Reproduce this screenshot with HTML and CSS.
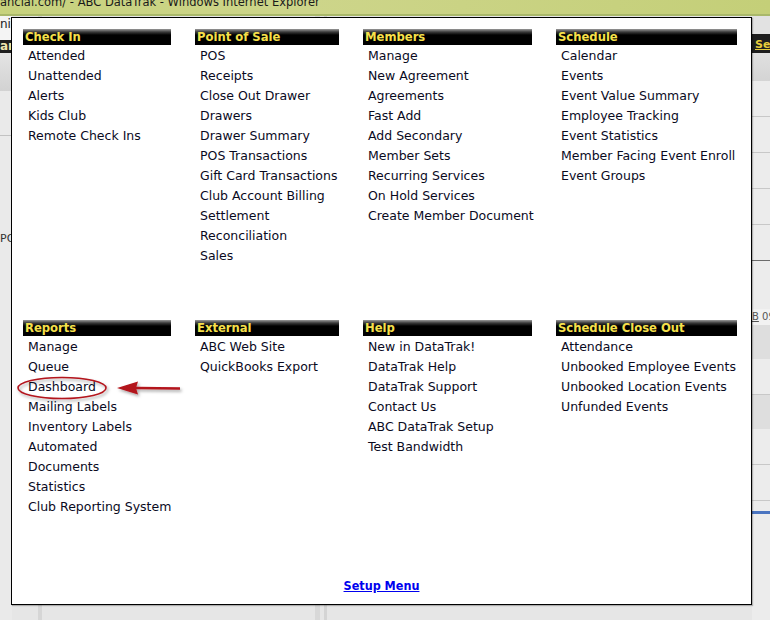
FILE: index.html
```html
<!DOCTYPE html>
<html lang="en">
<head>
  <meta charset="UTF-8">
  <title>ABC DataTrak - Menu</title>
  <link rel="stylesheet" href="styles.css">
</head>
<body>
  <div class="titlebar">ancial.com/ - ABC DataTrak - Windows Internet Explorer</div>

  <div class="page">
    <div class="side side-left">
      <div class="blk blk-light">niv</div>
      <div class="blk blk-dark">an</div>
      <div class="blk blk-grey"></div>
      <div class="blk blk-rule"></div>
      <div class="blk blk-text">PO</div>
    </div>
    <div class="side side-mid"></div>
    <div class="side side-right">
      <div class="blk blk-top"></div>
      <div class="blk blk-dark"><u class="set">Set</u></div>
      <div class="blk blk-grey"></div>
      <div class="blk blk-row"></div>
      <div class="blk blk-row"></div>
      <div class="blk blk-row"></div>
      <div class="blk blk-row"></div>
      <div class="blk blk-row blk-row-dark"></div>
      <div class="blk blk-pad"></div>
      <div class="blk blk-small"><u>B</u> 09</div>
      <div class="blk blk-grey2"></div>
      <div class="blk blk-row"></div>
      <div class="blk blk-grey2"></div>
      <div class="blk blk-row"></div>
      <div class="blk blk-row"></div>
      <div class="blk blk-blue"></div>
    </div>
  </div>

  <div class="menu">
    <div class="menu-grid">
      <div class="group">
        <div class="group-title">Check In</div>
        <div class="item">Attended</div>
        <div class="item">Unattended</div>
        <div class="item">Alerts</div>
        <div class="item">Kids Club</div>
        <div class="item">Remote Check Ins</div>
      </div>
      <div class="group">
        <div class="group-title">Point of Sale</div>
        <div class="item">POS</div>
        <div class="item">Receipts</div>
        <div class="item">Close Out Drawer</div>
        <div class="item">Drawers</div>
        <div class="item">Drawer Summary</div>
        <div class="item">POS Transactions</div>
        <div class="item">Gift Card Transactions</div>
        <div class="item">Club Account Billing</div>
        <div class="item">Settlement</div>
        <div class="item">Reconciliation</div>
        <div class="item">Sales</div>
      </div>
      <div class="group">
        <div class="group-title">Members</div>
        <div class="item">Manage</div>
        <div class="item">New Agreement</div>
        <div class="item">Agreements</div>
        <div class="item">Fast Add</div>
        <div class="item">Add Secondary</div>
        <div class="item">Member Sets</div>
        <div class="item">Recurring Services</div>
        <div class="item">On Hold Services</div>
        <div class="item">Create Member Document</div>
      </div>
      <div class="group">
        <div class="group-title">Schedule</div>
        <div class="item">Calendar</div>
        <div class="item">Events</div>
        <div class="item">Event Value Summary</div>
        <div class="item">Employee Tracking</div>
        <div class="item">Event Statistics</div>
        <div class="item">Member Facing Event Enroll</div>
        <div class="item">Event Groups</div>
      </div>

      <div class="group">
        <div class="group-title">Reports</div>
        <div class="item">Manage</div>
        <div class="item">Queue</div>
        <div class="item item-marked">Dashboard</div>
        <div class="item">Mailing Labels</div>
        <div class="item">Inventory Labels</div>
        <div class="item">Automated</div>
        <div class="item">Documents</div>
        <div class="item">Statistics</div>
        <div class="item">Club Reporting System</div>
      </div>
      <div class="group">
        <div class="group-title">External</div>
        <div class="item">ABC Web Site</div>
        <div class="item">QuickBooks Export</div>
      </div>
      <div class="group">
        <div class="group-title">Help</div>
        <div class="item">New in DataTrak!</div>
        <div class="item">DataTrak Help</div>
        <div class="item">DataTrak Support</div>
        <div class="item">Contact Us</div>
        <div class="item">ABC DataTrak Setup</div>
        <div class="item">Test Bandwidth</div>
      </div>
      <div class="group">
        <div class="group-title">Schedule Close Out</div>
        <div class="item">Attendance</div>
        <div class="item">Unbooked Employee Events</div>
        <div class="item">Unbooked Location Events</div>
        <div class="item">Unfunded Events</div>
      </div>
    </div>

    <div class="menu-footer"><a href="#" class="setup-link">Setup Menu</a></div>

    <!-- annotation drawn over the screenshot -->
    <svg class="callout" width="180" height="40" viewBox="0 0 180 40">
      <defs>
        <filter id="soft" x="-20%" y="-50%" width="140%" height="200%">
          <feDropShadow dx="1.5" dy="2" stdDeviation="1.5" flood-color="#000" flood-opacity="0.35"/>
        </filter>
      </defs>
      <g filter="url(#soft)">
        <ellipse cx="50" cy="21" rx="44" ry="10.5" fill="none" stroke="#b3131b" stroke-width="1.6"/>
        <line x1="124" y1="21" x2="168" y2="21.5" stroke="#b3131b" stroke-width="2.4"/>
        <path d="M105 21 L126 14.5 L124 21 L126 27.5 Z" fill="#b3131b"/>
      </g>
    </svg>
  </div>
</body>
</html>
```

FILE: styles.css
```css
body {
  margin: 0;
  width: 770px;
  height: 620px;
  overflow: hidden;
  background-color: #e6e6e6;
  font-family: "DejaVu Sans", Verdana, sans-serif;
}

.titlebar {
  height: 14px;
  line-height: 5px;
  font-size: 11.5px;
  color: #1a1a1a;
  white-space: nowrap;
  overflow: hidden;
  background: linear-gradient(90deg, #c7d27d, #cdd58a 40%, #c4cf78);
  border-bottom: 2px solid #a9b86a;
}

.page {
  display: flex;
  height: 604px;
}

.side-left {
  width: 12px;
  background-color: #eaeaea;
}

.side-mid {
  flex: 1;
  background: linear-gradient(90deg, #e6e6e6 26px, #d6d6d6 26px, #d6d6d6 30px, #e6e6e6 30px,
    #e6e6e6 303px, #d8d8d8 303px, #d8d8d8 308px, #e6e6e6 308px,
    #e6e6e6 312px, #d4d4d4 312px, #d4d4d4 315px, #e6e6e6 315px);
}

.side-right {
  width: 18px;
  background-color: #ececec;
}

.blk {
  overflow: hidden;
  white-space: nowrap;
  font-size: 12px;
}

.side-left .blk-light {
  height: 24px;
  line-height: 16px;
  color: #222;
  background-color: #f4f4f4;
}

.side-left .blk-dark {
  height: 13px;
  line-height: 13px;
  font-weight: bold;
  color: #eee6b0;
  background-color: #1e1e1e;
}

.side-left .blk-grey {
  height: 38px;
  background: linear-gradient(#e4e4e4, #d2d2d2);
}

.side-left .blk-rule {
  height: 44px;
  border-bottom: 1px solid #c2c2c2;
}

.side-left .blk-text {
  margin-top: 96px;
  line-height: 14px;
  font-size: 11px;
  color: #333;
}

.side-right .blk-top {
  height: 18px;
  background-color: #e2e2e2;
}

.side-right .blk-dark {
  height: 19px;
  line-height: 20px;
  background-color: #1e1e1e;
}

.set {
  color: #e6cc3c;
  font-weight: bold;
  font-size: 11px;
  padding-left: 3px;
}

.side-right .blk-grey {
  height: 28px;
  background: linear-gradient(#e0e0e0, #d4d4d4);
}

.side-right .blk-row {
  height: 35px;
  border-bottom: 1px solid #c8c8c8;
}

.side-right .blk-row-dark {
  border-bottom-color: #6c6c6c;
}

.side-right .blk-pad {
  height: 48px;
}

.side-right .blk-small {
  height: 16px;
  line-height: 16px;
  font-size: 10px;
  color: #555;
  background-color: #f2f2f2;
}

.side-right .blk-grey2 {
  height: 34px;
  background-color: #dedede;
}

.side-right .blk-blue {
  height: 3px;
  margin-top: 10px;
  background-color: #4a74c0;
}

.menu {
  position: absolute;
  left: 11px;
  top: 17px;
  width: 739px;
  height: 586px;
  display: flex;
  flex-direction: column;
  background-color: #fff;
  border: 1px solid #000;
  box-shadow: 1px 1px 1px rgba(0, 0, 0, 0.25);
}

.menu-grid {
  display: grid;
  grid-template-columns: 172px 168px 193px 181px;
  row-gap: 54px;
  padding: 11px 0 0 11px;
}

.group-title {
  height: 16px;
  line-height: 17px;
  margin-bottom: 1px;
  padding-left: 2px;
  margin-right: 24px;
  font-size: 11.6px;
  font-weight: bold;
  color: #f6e04a;
  background: linear-gradient(#9a9a9a, #3a3a3a 3px, #000 6px);
  white-space: nowrap;
}

.group:nth-child(4n) .group-title {
  margin-right: 0;
}

.item {
  height: 20px;
  line-height: 20px;
  padding-left: 5px;
  font-size: 12.5px;
  color: #0a0a1e;
  white-space: nowrap;
}

.menu-footer {
  margin-top: auto;
  padding-bottom: 10px;
  text-align: center;
  line-height: 16px;
}

.setup-link {
  font-family: "DejaVu Sans Condensed", "DejaVu Sans", sans-serif;
  font-size: 12.5px;
  font-weight: bold;
  color: #0000ee;
}

.callout {
  position: absolute;
  left: 0;
  top: 349px;
  overflow: visible;
}
```
